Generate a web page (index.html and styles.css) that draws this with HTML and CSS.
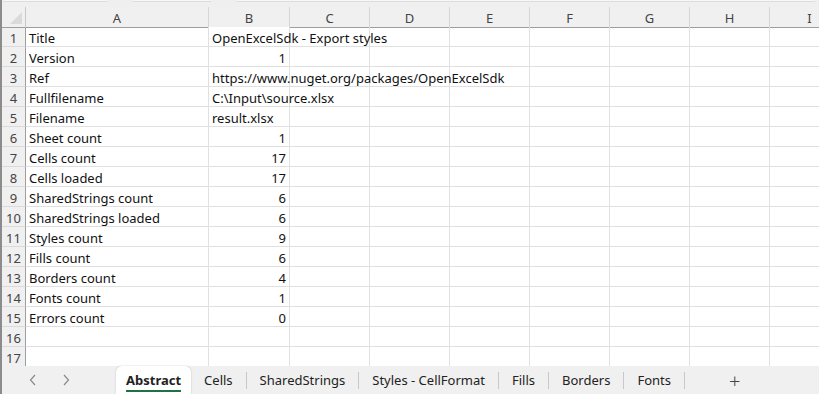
FILE: index.html
```html
<!DOCTYPE html>
<html>
<head>
<meta charset="utf-8">
<link rel="stylesheet" href="styles.css">
</head>
<body>
<div class="app">
  <div class="topstrip"><span class="pill p1"></span><span class="pill p2"></span><span class="pill p3"></span></div>
  <div class="sheet">
    <div class="grid">
      <div class="corner"><span class="tri"></span></div>
      <div class="ch">A</div><div class="ch">B</div><div class="ch">C</div><div class="ch">D</div><div class="ch">E</div><div class="ch">F</div><div class="ch">G</div><div class="ch">H</div><div class="ch">I</div>

      <div class="rh">1</div><div class="c">Title</div><div class="c ov">OpenExcelSdk - Export styles</div><div class="c"></div><div class="c"></div><div class="c"></div><div class="c"></div><div class="c"></div><div class="c"></div><div class="c"></div>
      <div class="rh">2</div><div class="c">Version</div><div class="c n">1</div><div class="c"></div><div class="c"></div><div class="c"></div><div class="c"></div><div class="c"></div><div class="c"></div><div class="c"></div>
      <div class="rh">3</div><div class="c">Ref</div><div class="c ov">https://www.nuget.org/packages/OpenExcelSdk</div><div class="c"></div><div class="c"></div><div class="c"></div><div class="c"></div><div class="c"></div><div class="c"></div><div class="c"></div>
      <div class="rh">4</div><div class="c">Fullfilename</div><div class="c ov">C:\Input\source.xlsx</div><div class="c"></div><div class="c"></div><div class="c"></div><div class="c"></div><div class="c"></div><div class="c"></div><div class="c"></div>
      <div class="rh">5</div><div class="c">Filename</div><div class="c">result.xlsx</div><div class="c"></div><div class="c"></div><div class="c"></div><div class="c"></div><div class="c"></div><div class="c"></div><div class="c"></div>
      <div class="rh">6</div><div class="c">Sheet count</div><div class="c n">1</div><div class="c"></div><div class="c"></div><div class="c"></div><div class="c"></div><div class="c"></div><div class="c"></div><div class="c"></div>
      <div class="rh">7</div><div class="c">Cells count</div><div class="c n">17</div><div class="c"></div><div class="c"></div><div class="c"></div><div class="c"></div><div class="c"></div><div class="c"></div><div class="c"></div>
      <div class="rh">8</div><div class="c">Cells loaded</div><div class="c n">17</div><div class="c"></div><div class="c"></div><div class="c"></div><div class="c"></div><div class="c"></div><div class="c"></div><div class="c"></div>
      <div class="rh">9</div><div class="c">SharedStrings count</div><div class="c n">6</div><div class="c"></div><div class="c"></div><div class="c"></div><div class="c"></div><div class="c"></div><div class="c"></div><div class="c"></div>
      <div class="rh">10</div><div class="c">SharedStrings loaded</div><div class="c n">6</div><div class="c"></div><div class="c"></div><div class="c"></div><div class="c"></div><div class="c"></div><div class="c"></div><div class="c"></div>
      <div class="rh">11</div><div class="c">Styles count</div><div class="c n">9</div><div class="c"></div><div class="c"></div><div class="c"></div><div class="c"></div><div class="c"></div><div class="c"></div><div class="c"></div>
      <div class="rh">12</div><div class="c">Fills count</div><div class="c n">6</div><div class="c"></div><div class="c"></div><div class="c"></div><div class="c"></div><div class="c"></div><div class="c"></div><div class="c"></div>
      <div class="rh">13</div><div class="c">Borders count</div><div class="c n">4</div><div class="c"></div><div class="c"></div><div class="c"></div><div class="c"></div><div class="c"></div><div class="c"></div><div class="c"></div>
      <div class="rh">14</div><div class="c">Fonts count</div><div class="c n">1</div><div class="c"></div><div class="c"></div><div class="c"></div><div class="c"></div><div class="c"></div><div class="c"></div><div class="c"></div>
      <div class="rh">15</div><div class="c">Errors count</div><div class="c n">0</div><div class="c"></div><div class="c"></div><div class="c"></div><div class="c"></div><div class="c"></div><div class="c"></div><div class="c"></div>
      <div class="rh">16</div><div class="c"></div><div class="c"></div><div class="c"></div><div class="c"></div><div class="c"></div><div class="c"></div><div class="c"></div><div class="c"></div><div class="c"></div>
      <div class="rh">17</div><div class="c"></div><div class="c"></div><div class="c"></div><div class="c"></div><div class="c"></div><div class="c"></div><div class="c"></div><div class="c"></div><div class="c"></div>
    </div>
  </div>
  <div class="tabbar">
    <div class="nav">
      <svg class="arrow" width="10" height="14" viewBox="0 0 10 14"><path d="M7 2 L2.5 7 L7 12" fill="none" stroke="#8a8a8a" stroke-width="1.2"/></svg>
      <svg class="arrow" width="10" height="14" viewBox="0 0 10 14"><path d="M3 2 L7.5 7 L3 12" fill="none" stroke="#8a8a8a" stroke-width="1.2"/></svg>
    </div>
    <div class="tabs">
      <div class="tab active"><span class="lbl">Abstract</span></div>
      <div class="tab">Cells</div>
      <div class="sep"></div>
      <div class="tab">SharedStrings</div>
      <div class="sep"></div>
      <div class="tab">Styles - CellFormat</div>
      <div class="sep"></div>
      <div class="tab">Fills</div>
      <div class="sep"></div>
      <div class="tab">Borders</div>
      <div class="sep"></div>
      <div class="tab">Fonts</div>
      <div class="sep"></div>
      <div class="add">+</div>
    </div>
  </div>
</div>
</body>
</html>
```

FILE: styles.css
```css
* { box-sizing: border-box; }
html, body {
  margin: 0;
  padding: 0;
  width: 819px;
  height: 394px;
  overflow: hidden;
  background: #ffffff;
  font-family: "Noto Sans", "Liberation Sans", sans-serif;
}
.app {
  width: 819px;
  height: 394px;
  display: flex;
  flex-direction: column;
  border-left: 2px solid #8c8c8c;
}
.topstrip {
  height: 7px;
  background: #efefef;
  display: flex;
  gap: 24px;
}
.pill {
  display: block;
  height: 2px;
  background: #f7f7f7;
  border-bottom: 1px solid #dcdcdc;
  border-radius: 0 0 4px 4px;
}
.p1 { width: 106px; }
.p2 { width: 80px; }
.p3 { width: 580px; }
.sheet {
  flex: 1;
  overflow: hidden;
}
.grid {
  display: grid;
  grid-template-columns: 24px 183px 81px 80px 80px 80px 80px 80px 80px 80px;
  grid-auto-rows: 20px;
  font-size: 13px;
  color: #111;
}
.corner {
  background: #f0f0f0;
  border-right: 1px solid #c8c8c8;
  border-bottom: 1px solid #9e9e9e;
  position: relative;
  height: 21px;
}
.tri {
  position: absolute;
  right: 3px;
  bottom: 3px;
  width: 0;
  height: 0;
  border-left: 12px solid transparent;
  border-bottom: 12px solid #dadada;
}
.ch {
  background: #f0f0f0;
  border-right: 1px solid #d6d6d6;
  border-bottom: 1px solid #9e9e9e;
  height: 21px;
  display: flex;
  align-items: center;
  justify-content: center;
  color: #444;
  font-size: 13px;
  padding-top: 1px;
}
.rh {
  background: #f0f0f0;
  border-right: 1px solid #9e9e9e;
  border-bottom: 1px solid #dadada;
  display: flex;
  align-items: center;
  justify-content: center;
  color: #444;
  font-size: 13px;
  padding-top: 3px;
}
.c {
  border-right: 1px solid #e0e0e0;
  border-bottom: 1px solid #e0e0e0;
  display: flex;
  align-items: center;
  padding: 3px 3px 0 3px;
  white-space: nowrap;
  min-width: 0;
}
.c.ov {
  overflow: visible;
  position: relative;
  z-index: 1;
  background: #fff;
}
.c.n { justify-content: flex-end; }
.tabbar {
  height: 28px;
  background: #f0f0f0;
  display: flex;
  align-items: stretch;
  flex: none;
}
.nav {
  width: 114px;
  display: flex;
  align-items: center;
  padding-left: 26px;
  gap: 23px;
}
.tabs {
  display: flex;
  align-items: center;
  font-size: 13px;
  color: #222;
}
.tab {
  padding: 0 13px;
  white-space: nowrap;
}
.tab.active {
  align-self: stretch;
  background: #fff;
  border-radius: 6px 6px 0 0;
  box-shadow: 0 0 2px rgba(0,0,0,0.2);
  padding: 0 10px;
  display: flex;
  align-items: center;
  font-weight: bold;
}
.tab.active .lbl {
  border-bottom: 2px solid #1f7244;
  padding-bottom: 1px;
  margin-top: 3px;
}
.sep {
  width: 1px;
  height: 17px;
  background: #c8c8c8;
}
.add {
  padding-left: 44px;
  font-size: 20px;
  color: #444;
  font-weight: 300;
}
```
